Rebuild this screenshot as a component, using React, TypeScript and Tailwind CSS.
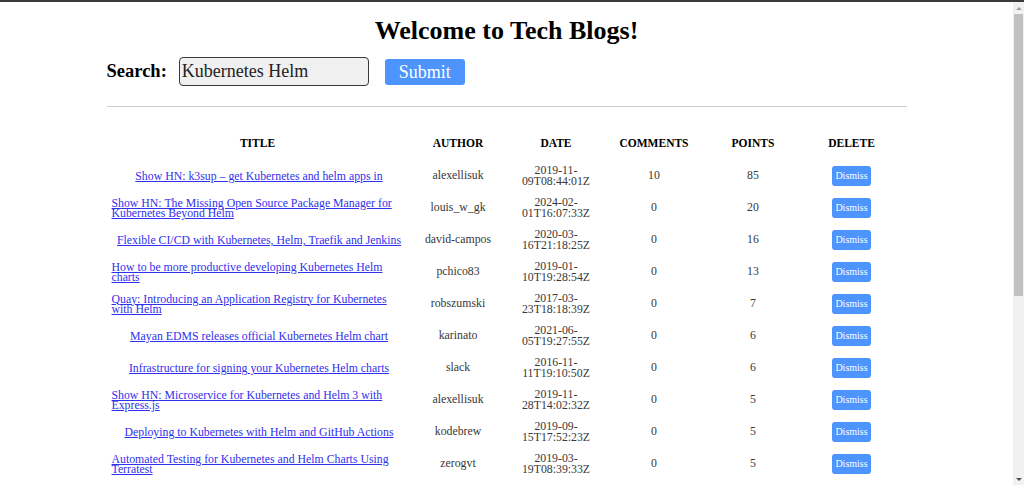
import React from "react";

interface Story {
  title: string;
  author: string;
  date: string;
  comments: number;
  points: number;
}

const stories: Story[] = [
  { title: "Show HN: k3sup – get Kubernetes and helm apps in", author: "alexellisuk", date: "2019-11-09T08:44:01Z", comments: 10, points: 85 },
  { title: "Show HN: The Missing Open Source Package Manager for Kubernetes Beyond Helm", author: "louis_w_gk", date: "2024-02-01T16:07:33Z", comments: 0, points: 20 },
  { title: "Flexible CI/CD with Kubernetes, Helm, Traefik and Jenkins", author: "david-campos", date: "2020-03-16T21:18:25Z", comments: 0, points: 16 },
  { title: "How to be more productive developing Kubernetes Helm charts", author: "pchico83", date: "2019-01-10T19:28:54Z", comments: 0, points: 13 },
  { title: "Quay: Introducing an Application Registry for Kubernetes with Helm", author: "robszumski", date: "2017-03-23T18:18:39Z", comments: 0, points: 7 },
  { title: "Mayan EDMS releases official Kubernetes Helm chart", author: "karinato", date: "2021-06-05T19:27:55Z", comments: 0, points: 6 },
  { title: "Infrastructure for signing your Kubernetes Helm charts", author: "slack", date: "2016-11-11T19:10:50Z", comments: 0, points: 6 },
  { title: "Show HN: Microservice for Kubernetes and Helm 3 with Express.js", author: "alexellisuk", date: "2019-11-28T14:02:32Z", comments: 0, points: 5 },
  { title: "Deploying to Kubernetes with Helm and GitHub Actions", author: "kodebrew", date: "2019-09-15T17:52:23Z", comments: 0, points: 5 },
  { title: "Automated Testing for Kubernetes and Helm Charts Using Terratest", author: "zerogvt", date: "2019-03-19T08:39:33Z", comments: 0, points: 5 },
  { title: "Helm 3 released", author: "tofflos", date: "2019-11-13T17:39:49Z", comments: 0, points: 4 },
  { title: "Kubernetes Helm charts for beginners", author: "jpetazzo", date: "2018-04-02T09:11:20Z", comments: 0, points: 4 },
];

const serif = "font-['Liberation_Serif','Times_New_Roman',serif]";

function Scrollbar() {
  return (
    <div className="w-[11px] shrink-0 bg-[#f1f1f1] flex flex-col">
      <div className="h-[12px] flex items-center justify-center">
        <div className="w-0 h-0 border-x-[3px] border-x-transparent border-b-[3px] border-b-[#a0a0a0]" />
      </div>
      <div className="h-[282px] ml-[1px] mr-[1px] bg-[#c1c1c1]" />
      <div className="flex-1" />
      <div className="h-[12px] flex items-center justify-center">
        <div className="w-0 h-0 border-x-[3px] border-x-transparent border-t-[3px] border-t-[#505050]" />
      </div>
    </div>
  );
}

export default function App() {
  return (
    <div className={`border-t-2 border-[#3b3b3b] bg-white ${serif}`}>
      <div className="h-[483px] flex">
        <div className="flex-1 overflow-hidden">
          <div className="w-[800px] mx-auto pb-4">
            <h1 className="text-center text-[26px] font-bold text-black pt-[12px] leading-[34px]">
              Welcome to Tech Blogs!
            </h1>
            <form className="flex items-center mt-[9px]" onSubmit={(e) => e.preventDefault()}>
              <label className="text-[18.5px] font-bold text-black">Search:</label>
              <input
                defaultValue="Kubernetes Helm"
                className={`ml-[12px] w-[190px] h-[29px] rounded-[4px] border-[1.5px] border-[#3a3a3a] bg-[#f0f0f0] px-[2px] text-[18px] text-[#222] outline-none ${serif}`}
              />
              <button className={`ml-[16px] w-[80px] h-[26px] rounded-[3px] bg-[#4d94ff] text-white text-[18px] leading-none ${serif}`}>
                Submit
              </button>
            </form>
            <hr className="mt-[20px] border-t border-[#cccccc]" />
            <table className="mt-[21px] w-[794px] table-fixed border-collapse">
              <colgroup>
                <col className="w-[302px]" />
                <col className="w-[99px]" />
                <col className="w-[97px]" />
                <col className="w-[99px]" />
                <col className="w-[99px]" />
                <col className="w-[98px]" />
              </colgroup>
              <thead>
                <tr className="h-8 text-[11.5px] font-bold text-black">
                  <th>TITLE</th>
                  <th>AUTHOR</th>
                  <th>DATE</th>
                  <th>COMMENTS</th>
                  <th>POINTS</th>
                  <th>DELETE</th>
                </tr>
              </thead>
              <tbody>
                {stories.map((s, i) => (
                  <tr key={i} className="h-8 text-[11.8px] text-[#383838] text-center">
                    <td className="pl-[5px] pr-[2px] leading-[10.5px]">
                      <a href="#" className="inline-block text-left text-[#3030ee] underline">
                        {s.title}
                      </a>
                    </td>
                    <td>{s.author}</td>
                    <td className="leading-[11px] px-[14px]">{s.date}</td>
                    <td>{s.comments}</td>
                    <td>{s.points}</td>
                    <td>
                      <button className={`w-[39px] h-[20px] rounded-[3px] bg-[#4d94ff] text-white text-[10px] leading-none ${serif}`}>
                        Dismiss
                      </button>
                    </td>
                  </tr>
                ))}
              </tbody>
            </table>
          </div>
        </div>
        <Scrollbar />
      </div>
    </div>
  );
}
